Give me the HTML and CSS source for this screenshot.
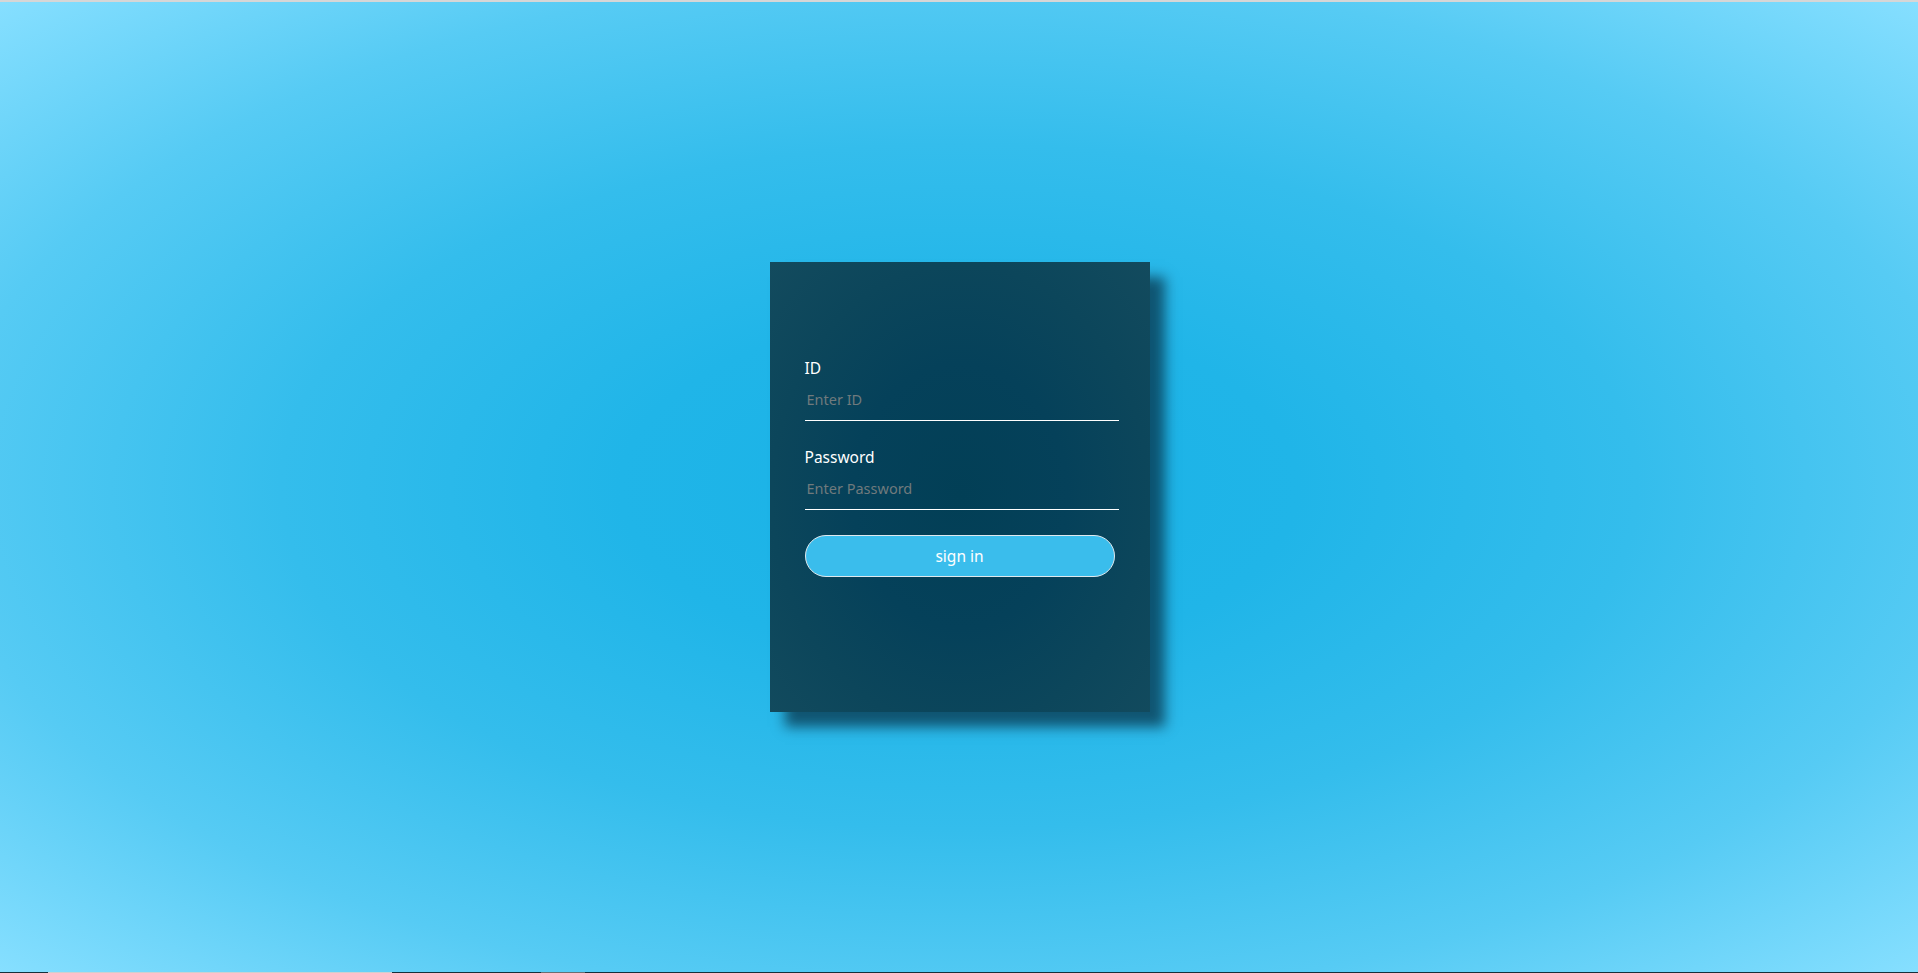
FILE: index.html
```html
<!DOCTYPE html>
<html lang="en">
<head>
<meta charset="utf-8">
<title>Sign in</title>
<link rel="stylesheet" href="styles.css">
</head>
<body>
<div class="page">
  <div class="topline"></div>
  <main class="stage">
    <form class="card">
      <div class="field">
        <label class="label" for="uid">ID</label>
        <input class="input" id="uid" type="text" placeholder="Enter ID">
      </div>
      <div class="field">
        <label class="label" for="pw">Password</label>
        <input class="input" id="pw" type="password" placeholder="Enter Password">
      </div>
      <button class="btn" type="button">sign in</button>
    </form>
  </main>
  <div class="bottomline"></div>
</div>
</body>
</html>
```

FILE: styles.css
```css
html, body {
  margin: 0;
  padding: 0;
  height: 100%;
}
body {
  font-family: "Noto Sans", "Liberation Sans", sans-serif;
  overflow: hidden;
}
.page {
  display: flex;
  flex-direction: column;
  height: 973px;
}
.topline {
  height: 2px;
  background: #d6d6d6;
}
.bottomline {
  height: 1px;
  background: linear-gradient(to right,
    #17303a 0, #17303a 48px,
    #cfcfcf 48px, #cfcfcf 392px,
    #17303a 392px, #17303a 541px,
    #6a6f72 541px, #6a6f72 585px,
    #17303a 585px, #17303a 100%);
}
.stage {
  flex: 1;
  display: flex;
  align-items: center;
  justify-content: center;
  background: radial-gradient(ellipse farthest-corner at 50% 50%,
    #19b2e6 0%,
    #20b5e8 25%,
    #34bdec 50%,
    #56cbf4 75%,
    #86dfff 100%);
}
.card {
  box-sizing: border-box;
  width: 380px;
  height: 450px;
  margin: 0 0 0 1px;
  padding: 96px 0 0 35px;
  display: flex;
  flex-direction: column;
  background: radial-gradient(ellipse farthest-corner at 50% 52%,
    #023f56 0%,
    #05415a 40%,
    #0c465b 70%,
    #134b5e 100%);
  box-shadow: 15px 15px 12px rgba(0, 20, 35, 0.6);
}
.field {
  display: flex;
  flex-direction: column;
  width: 314px;
  margin-bottom: 26px;
}
.label {
  color: #ffffff;
  font-size: 15.5px;
  line-height: 20px;
  height: 20px;
}
.input {
  box-sizing: border-box;
  width: 314px;
  height: 43px;
  margin: 0;
  padding: 0 2px;
  border: 0;
  border-bottom: 1px solid #ffffff;
  background: transparent;
  color: #ffffff;
  font-family: "Noto Sans", "Liberation Sans", sans-serif;
  font-size: 14.5px;
  outline: none;
}
.input::placeholder {
  color: #707a7d;
}
.btn {
  box-sizing: border-box;
  width: 310px;
  height: 42px;
  margin: -1px 0 0 0;
  padding: 0;
  border: 1px solid #dfe9ee;
  border-radius: 21px;
  background: #3abdec;
  color: #ffffff;
  font-family: "Noto Sans", "Liberation Sans", sans-serif;
  font-size: 15.5px;
  line-height: 40px;
  cursor: pointer;
}
```
